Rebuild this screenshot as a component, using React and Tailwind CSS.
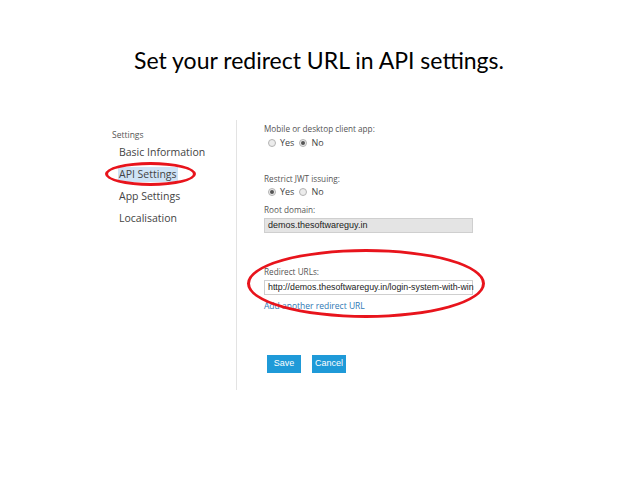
function Radio({ checked, label }) {
  return (
    <span className="flex items-center gap-[4px] mr-[5px]">
      <span className="w-[8px] h-[8px] rounded-full border border-[#b4b4b4] bg-[#ececec] flex items-center justify-center">
        {checked && <span className="w-[4px] h-[4px] rounded-full bg-[#555]" />}
      </span>
      <span>{label}</span>
    </span>
  );
}

export default function App() {
  const ui = "font-['Open_Sans','Noto_Sans',sans-serif]";
  return (
    <div className="w-[638px] h-[478px] bg-white overflow-hidden">
      <h1 className="pt-[46px] h-[120px] text-center text-[23px] leading-[28px] text-black font-['Lato',sans-serif]">
        Set your redirect URL in API settings.
      </h1>
      <div className={`flex ${ui}`}>
        <nav className="w-[125px] ml-[112px] border-r border-[#e3e3e3] h-[270px] pt-[9px]">
          <div className="text-[8.5px] leading-[12px] text-[#555]">Settings</div>
          <div className="pl-[7px] text-[10.5px] text-[#444] flex flex-col">
            <div className="h-[22px] leading-[22px]">Basic Information</div>
            <div className="h-[22px] flex items-center relative">
              <span className="bg-[#cfe3f6] leading-[15px] px-[1px] -ml-[1px]">API Settings</span>
              <span className="absolute left-[-14px] top-[-1px] w-[91px] h-[24px] rounded-[50%] border-[3px] border-[#e8141c]" />
            </div>
            <div className="h-[22px] leading-[22px]">App Settings</div>
            <div className="h-[22px] leading-[22px]">Localisation</div>
          </div>
        </nav>
        <div className="pl-[27px] text-[8.2px] text-[#555] flex flex-col">
          <div className="h-[10px] mt-[4px] leading-[10px]">Mobile or desktop client app:</div>
          <div className="flex items-center h-[14px] mt-[2px] ml-[4px] text-[#444] text-[9px]">
            <Radio label="Yes" />
            <Radio checked label="No" />
          </div>
          <div className="h-[10px] mt-[24px] leading-[10px]">Restrict JWT issuing:</div>
          <div className="flex items-center h-[14px] mt-[1px] ml-[4px] text-[#444] text-[9px]">
            <Radio checked label="Yes" />
            <Radio label="No" />
          </div>
          <div className="h-[10px] mt-[6px] leading-[10px]">Root domain:</div>
          <div className="w-[209px] h-[15px] mt-[3px] bg-[#e4e4e4] border border-[#cfcfcf] pl-[3px] text-[9px] leading-[13px] text-[#222] font-['Liberation_Sans',sans-serif]">
            demos.thesoftwareguy.in
          </div>
          <div className="relative mt-[34px]">
            <div className="h-[10px] leading-[10px]">Redirect URLs:</div>
            <div className="w-[209px] h-[15px] mt-[3px] bg-white border border-[#cfcfcf] pl-[3px] text-[8.8px] leading-[13px] text-[#222] font-['Liberation_Sans',sans-serif] whitespace-nowrap">
              http://demos.thesoftwareguy.in/login-system-with-win
            </div>
            <div className="h-[12px] mt-[5px] leading-[12px] text-[#2f78b4] text-[8.5px]">Add another redirect URL</div>
            <span className="absolute left-[-17px] top-[-18px] w-[238px] h-[69px] rounded-[50%] border-[3px] border-[#e8141c] pointer-events-none" />
          </div>
          <div className="flex gap-[11px] mt-[43px] ml-[3px]">
            <button className="w-[34px] h-[18px] bg-[#1f9ad8] text-white text-[9px] font-['Liberation_Sans',sans-serif]">Save</button>
            <button className="w-[34px] h-[18px] bg-[#1f9ad8] text-white text-[9px] font-['Liberation_Sans',sans-serif]">Cancel</button>
          </div>
        </div>
      </div>
    </div>
  );
}
